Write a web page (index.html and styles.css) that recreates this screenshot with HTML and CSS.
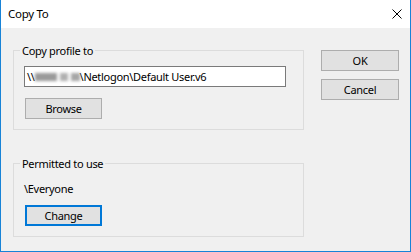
FILE: index.html
```html
<html lang="en">
<head>
  <meta charset="UTF-8">
  <title>Copy To</title>
  <link rel="stylesheet" href="styles.css">
</head>
<body>
  <div class="window">
    <div class="titlebar">
      <span class="title">Copy To</span>
      <svg class="close" width="10" height="10" viewBox="0 0 10 10">
        <path d="M0.5 0.5 L9.5 9.5 M9.5 0.5 L0.5 9.5" stroke="#000" stroke-width="1" fill="none"/>
      </svg>
    </div>

    <div class="content">
      <div class="main">
        <div class="group">
          <div class="group-title">Copy profile to</div>
          <div class="field">
            <span>\\</span>
            <span class="blurred"><i></i><i></i><i></i></span>
            <span>\Netlogon\Default User.v6</span>
          </div>
          <button class="btn browse">Browse</button>
        </div>

        <div class="group second">
          <div class="group-title">Permitted to use</div>
          <div class="owner">\Everyone</div>
          <button class="btn focused">Change</button>
        </div>
      </div>

      <div class="side">
        <button class="btn wide">OK</button>
        <button class="btn wide cancel">Cancel</button>
      </div>
    </div>
  </div>
</body>
</html>
```

FILE: styles.css
```css
body {
  margin: 0;
  font-family: "Segoe UI", "Noto Sans", sans-serif;
  font-size: 11px;
  letter-spacing: -0.3px;
  color: #000;
}
.window {
  width: 411px;
  height: 252px;
  box-sizing: border-box;
  border: 1px solid #1883d7;
  border-top: none;
  display: flex;
  flex-direction: column;
}
.titlebar {
  height: 28px;
  background-color: #fff;
  display: flex;
  align-items: center;
  justify-content: space-between;
  padding: 0 8px 0 7px;
  flex-shrink: 0;
}
.title {
  font-size: 11.5px;
  line-height: 15px;
  margin-top: -1px;
}
.close {
  margin-top: -1px;
}
.content {
  flex: 1;
  background-color: #f0f0f0;
  display: flex;
  align-items: flex-start;
  padding: 22px 0 0 12px;
}
.main {
  width: 291px;
  display: flex;
  flex-direction: column;
}
.group {
  border: 1px solid #dcdcdc;
  padding: 0 0 10px 10px;
  display: flex;
  flex-direction: column;
  align-items: flex-start;
}
.group.second {
  margin-top: 33px;
}
.group-title {
  line-height: 15px;
  margin: -8px 0 0 -4px;
  padding: 0 2px;
  background-color: #f0f0f0;
}
.field {
  margin-top: 8px;
  width: 262px;
  height: 21px;
  box-sizing: border-box;
  border: 1px solid #7a7a7a;
  background-color: #fff;
  padding: 0 2px;
  display: flex;
  align-items: center;
  white-space: nowrap;
  overflow: hidden;
}
.blurred {
  display: flex;
  gap: 3px;
  width: 45px;
  height: 8px;
  margin: 1px 0 0 0;
  filter: blur(1.4px);
}
.blurred i:nth-child(1) {
  width: 22px;
  background-color: #9a9a9a;
}
.blurred i:nth-child(2) {
  width: 8px;
  background-color: #b0b0b0;
}
.blurred i:nth-child(3) {
  width: 9px;
  background-color: #a6a6a6;
}
.owner {
  margin-top: 10px;
  line-height: 15px;
}
.btn {
  font-family: inherit;
  font-size: 11px;
  letter-spacing: -0.3px;
  color: #000;
  width: 77px;
  height: 21px;
  padding: 0;
  margin: 0;
  background-color: #e1e1e1;
  border: 1px solid #adadad;
  box-sizing: border-box;
  line-height: 17px;
}
.browse {
  margin: 11px 0 0 1px;
}
.focused {
  margin: 9px 0 0 1px;
  border: 2px solid #0078d7;
}
.side {
  margin-left: 17px;
  display: flex;
  flex-direction: column;
  gap: 8px;
}
.btn.wide {
  width: 78px;
}
```
